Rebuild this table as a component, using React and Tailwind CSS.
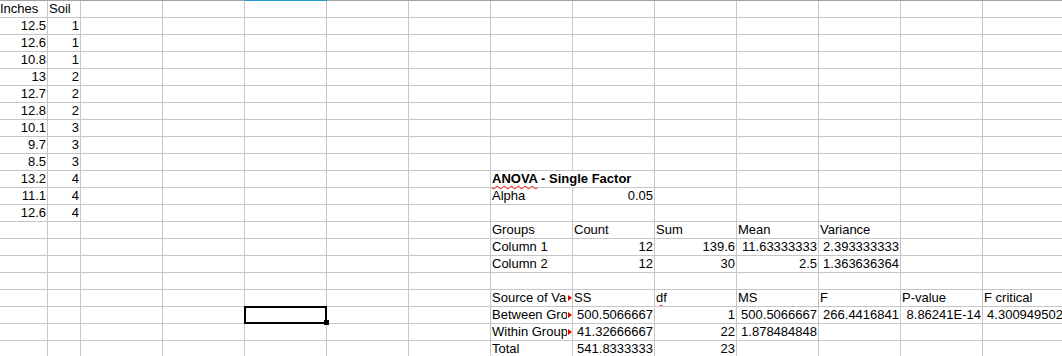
import React from 'react';

const COLS = ['A', 'B', 'C', 'D', 'E', 'F', 'G', 'H', 'I', 'J', 'K', 'L', 'M', 'N'];
const ROWS = Array.from({ length: 21 }, (_, i) => i + 1);

// sheet contents, keyed by cell address
const CELLS = {
  A1: { v: 'Inches', first: true },
  B1: { v: 'Soil' },
  H11: { v: 'ANOVA - Single Factor', title: true },
  H12: { v: 'Alpha' },
  I12: { v: '0.05' },
  H14: { v: 'Groups' },
  I14: { v: 'Count' },
  J14: { v: 'Sum' },
  K14: { v: 'Mean' },
  L14: { v: 'Variance' },
  H15: { v: 'Column 1' },
  I15: { v: '12' },
  J15: { v: '139.6' },
  K15: { v: '11.63333333' },
  L15: { v: '2.393333333' },
  H16: { v: 'Column 2' },
  I16: { v: '12' },
  J16: { v: '30' },
  K16: { v: '2.5' },
  L16: { v: '1.363636364' },
  H18: { v: 'Source of Variation', clip: true },
  I18: { v: 'SS' },
  J18: { v: 'df', wavy: true },
  K18: { v: 'MS' },
  L18: { v: 'F' },
  M18: { v: 'P-value' },
  N18: { v: 'F critical' },
  H19: { v: 'Between Groups', clip: true },
  I19: { v: '500.5066667' },
  J19: { v: '1' },
  K19: { v: '500.5066667' },
  L19: { v: '266.4416841' },
  M19: { v: '8.86241E-14' },
  N19: { v: '4.300949502' },
  H20: { v: 'Within Groups', clip: true },
  I20: { v: '41.32666667' },
  J20: { v: '22' },
  K20: { v: '1.878484848' },
  H21: { v: 'Total' },
  I21: { v: '541.8333333' },
  J21: { v: '23' },
};

const inches = ['12.5', '12.6', '10.8', '13', '12.7', '12.8', '10.1', '9.7', '8.5', '13.2', '11.1', '12.6'];
const soil = ['1', '1', '1', '2', '2', '2', '3', '3', '3', '4', '4', '4'];
inches.forEach((v, i) => {
  CELLS['A' + (i + 2)] = { v };
  CELLS['B' + (i + 2)] = { v: soil[i] };
});

const isNum = (v) => /^-?[\d.]+(E-?\d+)?$/.test(v);

function Cell({ addr }) {
  const c = CELLS[addr];
  const selected = addr === 'E19';
  const overflow = (c && c.title) || selected;

  return (
    <div
      className={
        'relative h-[17px] border-b border-[#c6c6c6] whitespace-nowrap ' +
        (c && c.title ? 'border-r border-r-transparent ' : 'border-r border-r-[#c6c6c6] ') +
        (overflow ? 'overflow-visible z-10 ' : 'overflow-hidden ')
      }
    >
      {c && (
        <div
          className={
            'h-[16px] leading-[16px] ' +
            (isNum(c.v) ? 'text-right pr-[1px] ' : 'text-left pl-[1px] ') +
            (c.title ? 'font-bold ' : '') +
            (c.clip ? 'w-[76px] overflow-hidden ' : '') +
            (c.first ? 'relative -left-px ' : '')
          }
        >
          {c.title ? (
            <>
              <span className="underline decoration-wavy decoration-[#ff0000] decoration-1 underline-offset-[2px]">ANOVA</span>
              {' - Single Factor'}
            </>
          ) : c.wavy ? (
            <span className="underline decoration-wavy decoration-[#ff0000] decoration-1 underline-offset-[2px]">{c.v}</span>
          ) : (
            c.v
          )}
        </div>
      )}
      {c && c.clip && (
        // text-overflow marker
        <svg className="absolute right-0 top-[4px] z-10" width="5" height="8" viewBox="0 0 5 8">
          <polygon points="1,1 5,4 1,7" fill="#e00000" />
        </svg>
      )}
      {selected && (
        <>
          <div className="absolute -top-px -left-px w-[83px] h-[18px] border-2 border-black z-20" />
          <div className="absolute left-[79px] top-[13px] w-[5px] h-[5px] bg-black z-30" />
        </>
      )}
    </div>
  );
}

export default function App() {
  return (
    <div className="w-[1062px] h-[356px] overflow-hidden bg-white text-black text-[13px] font-['Liberation_Sans',Arial,sans-serif]">
      <div className="grid grid-cols-[48px_33px_repeat(12,82px)] w-max">
        {COLS.map((col) => (
          <div key={col} className={'h-px ' + (col === 'E' ? 'bg-[#1b97d6]' : 'bg-[#a3a3a3]')} />
        ))}
        {ROWS.map((r) => COLS.map((col) => <Cell key={col + r} addr={col + r} />))}
      </div>
    </div>
  );
}
